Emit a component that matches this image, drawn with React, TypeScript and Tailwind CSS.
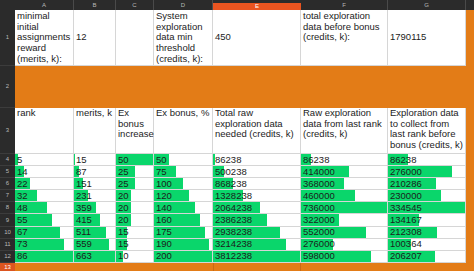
import React from "react";

const columns = ["A", "B", "C", "D", "E", "F", "G"];

const rows: number[][] = [
  [5, 15, 50, 50, 86238, 86238, 86238],
  [14, 87, 25, 75, 500238, 414000, 276000],
  [22, 151, 25, 100, 868238, 368000, 210286],
  [32, 231, 20, 120, 1328238, 460000, 230000],
  [48, 359, 20, 140, 2064238, 736000, 334545],
  [55, 415, 20, 160, 2386238, 322000, 134167],
  [67, 511, 15, 175, 2938238, 552000, 212308],
  [73, 559, 15, 190, 3214238, 276000, 100364],
  [86, 663, 10, 200, 3812238, 598000, 206207],
];

const headings = [
  "rank",
  "merits, k",
  "Ex bonus increase",
  "Ex bonus, %",
  "Total raw exploration data needed (credits, k)",
  "Raw exploration data from last rank (credits, k)",
  "Exploration data to collect from last rank before bonus (credits, k)",
];

// biggest value per column, used for the data bars
const maxes = columns.map((_, c) => Math.max(...rows.map((r) => r[c])));

const font = { fontFamily: '"Liberation Sans", Arial, sans-serif' };

const RowHead = ({ n, active }: { n: number; active?: boolean }) => (
  <div
    className={`flex items-center justify-center border-b border-[#3c3c3c] text-[6px] ${
      active ? "bg-[#dc5520] text-white" : "bg-[#2b2b2b] text-[#b8b8b8]"
    }`}
  >
    {n}
  </div>
);

const Cell = ({ children, className = "" }: { children?: React.ReactNode; className?: string }) => (
  <div className={`border-r border-b border-[#d6d6d6] bg-white pl-[2px] text-[9.5px] leading-[10.7px] text-[#1c1c1c] ${className}`}>
    {children}
  </div>
);

const Orange = ({ className = "" }: { className?: string }) => <div className={`bg-[#e37c17] ${className}`} />;

export default function App() {
  return (
    <div
      className="grid h-[271px] w-[474px] overflow-hidden bg-[#e37c17] grid-cols-[15px_59px_42px_38px_59px_88px_87px_78px_1fr] grid-rows-[10px_56px_42px_46px_repeat(9,12.1px)_1fr]"
      style={font}
    >
      {/* column headers */}
      <div className="bg-[#2b2b2b]" />
      {columns.map((c) =>
        c === "E" ? (
          <div key={c} className="border-t-[3px] border-[#2b2b2b] bg-[#e95420] flex items-center justify-center text-[6px] text-white">
            {c}
          </div>
        ) : (
          <div key={c} className="flex items-center justify-center border-r border-[#4a4a4a] bg-[#2b2b2b] text-[6px] text-[#b8b8b8]">
            {c}
          </div>
        )
      )}
      <div className="bg-[#2b2b2b]" />

      {/* row 1 */}
      <RowHead n={1} />
      <Cell className="pt-[1px]">minimal initial assignments reward (merits, k):</Cell>
      <Cell className="flex items-center">12</Cell>
      <Cell />
      <Cell className="pt-[1px]">System exploration data min threshold (credits, k):</Cell>
      <Cell className="flex items-center">450</Cell>
      <Cell className="pt-[1px]">total exploration data before bonus (credits, k):</Cell>
      <Cell className="flex items-center">1790115</Cell>
      <Orange />

      {/* row 2 */}
      <RowHead n={2} />
      {columns.map((c) => (
        <Orange key={c} />
      ))}
      <Orange />

      {/* row 3 */}
      <RowHead n={3} />
      {headings.map((h) => (
        <Cell key={h} className="pr-[1px]">
          {h}
        </Cell>
      ))}
      <Orange />

      {/* rows 4 - 12 with data bars */}
      {rows.map((r, i) => (
        <React.Fragment key={i}>
          <RowHead n={i + 4} />
          {r.map((v, c) => (
            <Cell key={c} className="relative flex items-center !leading-[12px]">
              <div
                className="absolute left-0 top-0 bottom-0 bg-[#0ad66b]"
                style={{ width: `${(v / maxes[c]) * 100}%` }}
              />
              <span className="relative">{v}</span>
            </Cell>
          ))}
          <Orange />
        </React.Fragment>
      ))}

      {/* row 13 */}
      <RowHead n={13} active />
      <Orange />
      <Orange />
      <Orange />
      <Orange />
      <Orange className="border-x border-[#c96a14]" />
      <Orange />
      <Orange />
      <Orange />
    </div>
  );
}
